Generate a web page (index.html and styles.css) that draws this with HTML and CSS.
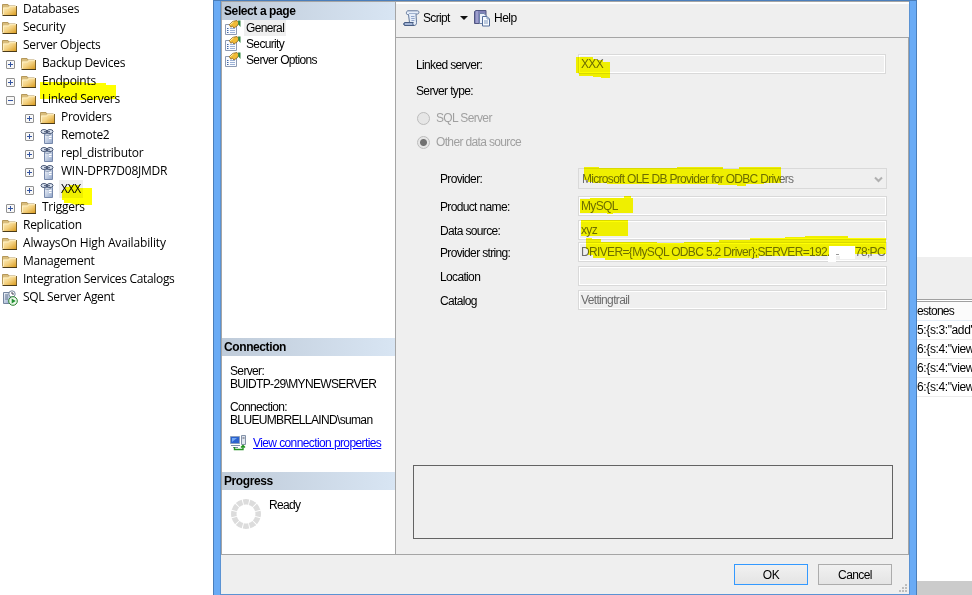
FILE: index.html
```
<!DOCTYPE html>
<html lang="en">
<head>
    <meta charset="utf-8">
    <title>Linked Server Properties</title>
    <link rel="stylesheet" href="styles.css">
</head>
<body>
    <svg class="defs">
        <defs>
            <linearGradient id="gold" x1="0" y1="0" x2="1" y2="1">
                <stop offset="0" stop-color="#fff0c0"/>
                <stop offset=".5" stop-color="#f3d182"/>
                <stop offset="1" stop-color="#d99a1c"/>
            </linearGradient>
            <linearGradient id="steel" x1="0" y1="0" x2="1" y2="1">
                <stop offset="0" stop-color="#f4f7fc"/>
                <stop offset="1" stop-color="#8fa4c8"/>
            </linearGradient>
        </defs>
        <symbol id="folder" viewBox="0 0 16 16">
            <path d="M.5 12.500V2.500h5.500l1 1.500h6.500v2" fill="#d9bd7c" stroke="#b5985a"/>
            <path d="M1 13V5.500h5L7.500 4H14.500v9z" fill="url(#gold)"/>
            <path d="M1.500 12.500v-6.500h5L8 4.700h6" fill="none" stroke="#fff3c9" stroke-width=".8"/>
            <path d="M.5 13.500h14.500" stroke="#4a3a18"/>
            <path d="M14.500 4v9" stroke="#7c6128"/>
        </symbol>
        <symbol id="linked" viewBox="0 0 16 16">
            <path d="M4.500 5.500h8v10h-8z" fill="url(#steel)" stroke="#7688ab"/>
            <path d="M9 8.500h2.500M9 10.500h2.500" stroke="#fff"/>
            <g fill="#dce5f2" stroke="#4a5875">
                <ellipse cx="4" cy="3.500" rx="3" ry="2"/>
                <ellipse cx="10" cy="3.500" rx="3" ry="2"/>
                <path d="M4 3.700h6"/>
                <path d="M4.500 6.500c2 1.500 5.500 1 7-.8" fill="none" stroke="#8695b0"/>
            </g>
        </symbol>
        <symbol id="agent" viewBox="0 0 16 16">
            <path d="M1.500 2.500h7v11h-7z" fill="url(#steel)" stroke="#74859f"/>
            <path d="M3 5h3M3 7h3M3 9h3" stroke="#63758f"/>
            <circle cx="10" cy="4" r="3.200" fill="#fff" stroke="#75879d"/>
            <path d="M10 2v2h2" fill="none" stroke="#445"/>
            <circle cx="11" cy="11" r="4.300" fill="#edf9ec" stroke="#27812c"/>
            <path d="M9.700 8.400v5.200l4-2.600z" fill="#229332"/>
        </symbol>
        <symbol id="page" viewBox="0 0 16 16">
            <path d="M.5 4.500h11v10H.5z" fill="#f9fbff" stroke="#8d9ab2"/>
            <path d="M2 8.500h1.500M2 10.500h1.500M2 12.500h1.500" stroke="#3f65a5"/>
            <path d="M5 8.500h5M5 10.500h5M5 12.500h5" stroke="#9bb1d6"/>
            <path d="M4.300 4.600 8 1.300l4-.8 2 2.300-1.700 3-3.400 2.200-1.600-2-1.400 1.300z" fill="#f1bb36" stroke="#8b6422" stroke-width=".8"/>
            <path d="M13 .5h2.500V7L13.300 4.500z" fill="#358a43"/>
            <path d="m5 4.800 3.500-2.900" stroke="#fff2a8"/>
        </symbol>
    </svg>

    <div class="desktop">
        <ul class="tree">
            <li><svg class="icon"><use href="#folder"/></svg><span>Databases</span></li>
            <li><svg class="icon"><use href="#folder"/></svg><span>Security</span></li>
            <li><svg class="icon"><use href="#folder"/></svg><span>Server Objects</span></li>
            <li class="sub"><i class="toggle"></i><svg class="icon"><use href="#folder"/></svg><span>Backup Devices</span></li>
            <li class="sub"><i class="toggle"></i><svg class="icon"><use href="#folder"/></svg><span>Endpoints</span></li>
            <li class="sub"><i class="toggle open"></i><svg class="icon"><use href="#folder"/></svg><span>Linked Servers</span>
                <svg class="marker mark-linked" width="77" height="20"><path d="M0 0h45v1h21v2h10v14h-15v1H25v-1H0z"/></svg>
            </li>
            <li class="leaf"><i class="toggle"></i><svg class="icon"><use href="#folder"/></svg><span>Providers</span></li>
            <li class="leaf"><i class="toggle"></i><svg class="icon"><use href="#linked"/></svg><span>Remote2</span></li>
            <li class="leaf"><i class="toggle"></i><svg class="icon"><use href="#linked"/></svg><span>repl_distributor</span></li>
            <li class="leaf"><i class="toggle"></i><svg class="icon"><use href="#linked"/></svg><span>WIN-DPR7D08JMDR</span></li>
            <li class="leaf"><i class="toggle"></i><svg class="icon"><use href="#linked"/></svg><span class="current">XXX</span>
                <svg class="marker mark-xxx" width="31" height="22"><path d="M3 2h4V0h10v3h13v17H14l-6-2H2v-3H0V5h3z"/></svg>
            </li>
            <li class="sub"><i class="toggle"></i><svg class="icon"><use href="#folder"/></svg><span>Triggers</span></li>
            <li><svg class="icon"><use href="#folder"/></svg><span>Replication</span></li>
            <li><svg class="icon"><use href="#folder"/></svg><span class="wide">AlwaysOn High Availability</span></li>
            <li><svg class="icon"><use href="#folder"/></svg><span>Management</span></li>
            <li><svg class="icon"><use href="#folder"/></svg><span class="tight">Integration Services Catalogs</span></li>
            <li><svg class="icon"><use href="#agent"/></svg><span class="tight">SQL Server Agent</span></li>
        </ul>

        <div class="dialog">
            <div class="window">
                <div class="panes">
                    <div class="sidebar">
                        <h2>Select a page</h2>
                        <ul class="pages">
                            <li><svg class="icon"><use href="#page"/></svg><span class="current">General</span></li>
                            <li><svg class="icon"><use href="#page"/></svg><span>Security</span></li>
                            <li><svg class="icon"><use href="#page"/></svg><span>Server Options</span></li>
                        </ul>
                        <h2>Connection</h2>
                        <div class="connection">
                            <p>Server:<br>BUIDTP-29\MYNEWSERVER</p>
                            <p>Connection:<br>BLUEUMBRELLAIND\suman</p>
                            <div class="view">
                                <svg class="icon" viewBox="0 0 16 16">
                                    <path d="M.5 1.500h9v7h-9z" fill="#2c62ce" stroke="#8ba0be"/>
                                    <path d="M2 3h5L2 7z" fill="#75aaf5"/>
                                    <path d="M1 10.500h9M3 12.500h5" stroke="#7c8eaa"/>
                                    <path d="M11.500.5h4v9h-4z" fill="#dfe6f0" stroke="#8492a8"/>
                                    <path d="M12.500 3h2" stroke="#556"/>
                                    <path d="M4.500 12v2.500h8.500V10M11 12.500l2-2 2 2" fill="none" stroke="#229122" stroke-width="1.400"/>
                                </svg>
                                <a href="#">View connection properties</a>
                            </div>
                        </div>
                        <h2>Progress</h2>
                        <div class="progress">
                            <svg width="30" height="30"><circle cx="15" cy="15" r="12.200" pathLength="120" stroke-dasharray="8.600 1.400" stroke-dashoffset="4.300"/></svg>
                            <span>Ready</span>
                        </div>
                    </div>

                    <div class="main">
                        <div class="toolbar">
                            <svg width="17" height="17" viewBox="0 0 17 17">
                                <path d="M5 .8h9.500c2 0 1.800 3.200 0 3.200h-1.500l.5 8.500c.2 2-1 3-2.500 3H2c-1.800 0-1.700-3 0-3h4.500L5.500 4.500H4.500c-1.800 0-1.300-3.700.5-3.700z" fill="#e5edf9" stroke="#60769b"/>
                                <path d="M8 6.500h3.500M8.200 8.500h3.500M8.400 10.500h3" stroke="#91a5ca"/>
                                <path d="M2 15.500h9c-1.500-.7-1.500-2-.7-3H2c-1.300 0-1.300 3 0 3z" fill="#a3b5d6" stroke="#485d83"/>
                                <path d="M6 3.500h7" stroke="#9fb1cf"/>
                            </svg>
                            <span class="script">Script</span>
                            <i class="caret"></i>
                            <svg width="17" height="17" viewBox="0 0 17 17">
                                <path d="M.5 1.500 2 .5h10v13H.5z" fill="#8182b8" stroke="#505681"/>
                                <path d="M3 1v12" stroke="#b9bde1"/>
                                <path d="M5.500 3.500H10l2 2v8H5.500z" fill="#eef3fc" stroke="#6f84a9"/>
                                <path d="M8.500 6.500H13l2.500 2.500v7h-7z" fill="#f8fbff" stroke="#546d99"/>
                                <path d="M13 6.500V9h2.500M10 11h4M10 13h4" fill="none" stroke="#819abf"/>
                            </svg>
                            <span class="help">Help</span>
                        </div>

                        <div class="form">
                            <div class="row first">
                                <label>Linked server:</label>
                                <div class="field">XXX
                                    <svg class="marker mark-name" width="35" height="22"><path d="M0 0h17v2h4v1h6v2h7v16h-9v-1h-8v-1H3v-3H0z"/></svg>
                                </div>
                            </div>
                            <div class="type">Server type:</div>
                            <div class="radio"><i></i><span>SQL Server</span></div>
                            <div class="radio on"><i></i><span>Other data source</span></div>

                            <div class="row provider">
                                <label>Provider:</label>
                                <div class="field select"><span class="long">Microsoft OLE DB Provider for ODBC Drivers</span>
                                    <svg class="arrow" width="9" height="8"><path d="m1 1.500 3.500 3.500L8 1.500"/></svg>
                                    <svg class="marker mark-provider" width="198" height="21"><path d="M0 0h15v1h78V0h46v2h16V0h42v16h-17v1h-18v2h-9v-1h-19v-1H23v-1H9v-1H4v-2H0z"/></svg>
                                </div>
                            </div>
                            <div class="row">
                                <label>Product name:</label>
                                <div class="field">MySQL
                                    <svg class="marker mark-product" width="54" height="19"><path d="M0 3h10V2h34V0h7v2h2v15H33v1h-6v-1H0z"/></svg>
                                </div>
                            </div>
                            <div class="row">
                                <label>Data source:</label>
                                <div class="field">xyz
                                    <svg class="marker mark-source" width="47" height="16"><path d="M0 0h47v16H0z"/></svg>
                                </div>
                            </div>
                            <div class="row string">
                                <label>Provider string:</label>
                                <div class="field"><span class="dsn"><span>DRIVER={MySQL ODBC 5.2 Driver};SERVER=192.</span><span>.78;PC</span></span>
                                    <svg class="marker mark-string" width="301" height="26"><path d="M0 2h6v1h9v3h56v1h27V6h35V4h31V2h35V1h20V0h43v2h38v16h-40v2H173v2h-41v1H92v1H19v-2H7v-3H2v-6H0z"/></svg>
                                    <svg class="erase" width="28" height="16"><path d="M1 0h26v13H12v-3H8v6H0V10h1z"/><path class="speck" d="M8 8.500h3"/></svg>
                                </div>
                            </div>
                            <div class="row">
                                <label>Location</label>
                                <div class="field"></div>
                            </div>
                            <div class="row">
                                <label>Catalog</label>
                                <div class="field">Vettingtrail</div>
                            </div>
                            <div class="description"></div>
                        </div>
                    </div>
                </div>
                <div class="buttons">
                    <button class="ok">OK</button>
                    <button>Cancel</button>
                    <svg class="grip" width="9" height="9"><path d="M6 0h2v2H6zM3 3h2v2H3zM6 3h2v2H6zM0 6h2v2H0zM3 6h2v2H3zM6 6h2v2H6z"/></svg>
                </div>
            </div>
        </div>

        <div class="results">
            <div class="band"></div>
            <div class="cell head">estones</div>
            <div class="cell">5:{s:3:"add"</div>
            <div class="cell">6:{s:4:"view</div>
            <div class="cell">6:{s:4:"view</div>
            <div class="cell">6:{s:4:"view</div>
            <div class="status"></div>
        </div>
    </div>
</body>
</html>
```

FILE: styles.css
```
* {
    box-sizing: border-box;
}

body {
    margin: 0;
    background: #fff;
    color: #000;
    font: 12px/18px "Liberation Sans", Arial, sans-serif;
    letter-spacing: -0.65px;
    overflow: hidden;
}

ul, h2, p {
    margin: 0;
    padding: 0;
    list-style: none;
}

.defs {
    position: absolute;
    width: 0;
    height: 0;
}

.desktop {
    display: flex;
    width: 972px;
    height: 595px;
}

.icon {
    width: 16px;
    height: 16px;
    flex: none;
}

.marker {
    position: absolute;
    fill: #ff0;
    mix-blend-mode: multiply;
    z-index: 1;
}

/* object explorer */
.tree {
    width: 213px;
    font: 12px/18px "Open Sans", "Noto Sans", sans-serif;
    letter-spacing: -0.27px;
}

.tree li {
    display: flex;
    align-items: center;
    position: relative;
    height: 18px;
    padding-left: 2px;
    white-space: nowrap;
}

.tree span {
    margin-left: 3px;
    padding: 0 2px;
    line-height: 18px;
}

.tree .wide {
    letter-spacing: -0.15px;
}

.tree .tight {
    letter-spacing: -0.33px;
}

.tree .sub {
    padding-left: 6px;
}

.tree .leaf {
    padding-left: 25px;
}

.tree .icon {
    margin-top: 1px;
}

.toggle {
    width: 9px;
    height: 9px;
    flex: none;
    margin: 2px 6px 0 0;
    border: 1px solid #919191;
    border-radius: 1px;
    background:
        linear-gradient(#3454a0, #3454a0) center / 5px 1px no-repeat,
        linear-gradient(#3454a0, #3454a0) center / 1px 5px no-repeat,
        #f8f8f8;
}

.toggle.open {
    background: linear-gradient(#3454a0, #3454a0) center / 5px 1px no-repeat, #f8f8f8;
}

.current {
    background: #efefef;
}

.mark-linked {
    left: 40px;
    top: -8px;
}

.mark-xxx {
    left: 62px;
    top: 5px;
}

/* properties dialog */
.dialog {
    width: 704px;
    padding: 0 6px;
    border: solid #4a7ebb;
    border-width: 1px 1px 0;
    background: #6aabf5;
}

.window {
    width: 690px;
    height: 594px;
    border: solid #5b93d3;
    border-width: 0 1px 1px;
    background: #efefef;
}

.panes {
    display: flex;
    width: 688px;
    height: 554px;
    border: 1px solid #a5a5a5;
    border-right: 0;
}

.sidebar {
    width: 174px;
    background: #fff;
    border-right: 1px solid #a5a5a5;
}

.sidebar h2 {
    height: 18px;
    padding-left: 2px;
    background: linear-gradient(90deg, #bfcbd9, #d8e5f3);
    font: bold 12px/18px "Liberation Sans", Arial, sans-serif;
    letter-spacing: -0.4px;
}

.pages {
    height: 318px;
}

.pages li {
    display: flex;
    height: 16px;
    padding-left: 3px;
    line-height: 16px;
}

.pages span {
    margin-left: 3px;
    padding: 0 2px;
}

.connection {
    height: 116px;
    padding: 9px 0 0 8px;
    line-height: 13px;
}

.connection p {
    margin-bottom: 10px;
}

.view {
    display: flex;
    align-items: center;
    gap: 7px;
    margin-top: -2px;
}

.view a {
    color: #00f;
    letter-spacing: -0.6px;
}

.progress {
    display: flex;
    padding: 9px 0 0 9px;
    gap: 8px;
    line-height: 13px;
}

.progress circle {
    fill: none;
    stroke: #dcdcdc;
    stroke-width: 5.5;
}

.main {
    flex: 1;
}

.toolbar {
    display: flex;
    align-items: center;
    height: 36px;
    padding: 0 0 5px 7px;
    border-top: 2px solid #fff;
    border-bottom: 1px solid #a5a5a5;
}

.script {
    width: 37px;
    margin-left: 3px;
}

.caret {
    margin-right: 6px;
    border: 4px solid transparent;
    border-top-color: #111;
    border-bottom: 0;
}

.help {
    margin-left: 3px;
    letter-spacing: -0.5px;
}

.form {
    height: 516px;
    padding: 16px 0 0 20px;
    border-right: 1px solid #a5a5a5;
}

.row {
    display: flex;
    height: 20px;
    margin: 0 0 4px 24px;
}

.row label {
    width: 138px;
    line-height: 22px;
}

.row.first {
    margin: 0 0 8px;
}

.first label {
    width: 162px;
}

.field {
    position: relative;
    width: 309px;
    height: 20px;
    padding-left: 2px;
    border: 1px solid #d9d9d9;
    box-shadow: inset 0 0 0 1px #fff;
    color: #6d6d6d;
    line-height: 18px;
    white-space: nowrap;
}

.first .field {
    width: 308px;
}

.type {
    height: 18px;
}

.radio {
    display: flex;
    align-items: center;
    height: 24px;
    margin-left: 1px;
    gap: 6px;
    color: #a0a0a0;
}

.type + .radio {
    margin-top: 6px;
}

.radio i {
    width: 13px;
    height: 13px;
    border: 1px solid #bcbcbc;
    border-radius: 50%;
    background: #e6e6e6;
}

.radio.on i {
    background: radial-gradient(circle, #707070 3px, #e6e6e6 4px);
}

.row.provider {
    height: 21px;
    margin-top: 14px;
    margin-bottom: 7px;
}

.field.select {
    height: 21px;
    padding-left: 3px;
    box-shadow: none;
    line-height: 20px;
}

.long {
    letter-spacing: -0.7px;
}

.arrow {
    position: absolute;
    right: 3px;
    top: 7px;
    fill: none;
    stroke: #b0b0b0;
    stroke-width: 2;
}

.row.string {
    margin-top: -2px;
}

.dsn {
    display: flex;
    justify-content: space-between;
    width: 304px;
}

.erase {
    position: absolute;
    left: 249px;
    top: 3px;
    fill: #fff;
    z-index: 2;
}

.speck {
    stroke: #999;
}

.mark-name {
    left: -3px;
    top: 2px;
}

.mark-provider {
    left: 5px;
    top: -2px;
}

.mark-product {
    left: 1px;
    top: -1px;
}

.mark-source {
    left: 2px;
    top: -1px;
}

.mark-string {
    left: 7px;
    top: -7px;
}

.description {
    width: 480px;
    height: 74px;
    margin: 155px 0 0 -3px;
    border: 1px solid #636363;
}

.buttons {
    display: flex;
    gap: 10px;
    position: relative;
    padding: 9px 0 0 513px;
}

button {
    width: 74px;
    height: 21px;
    padding: 0;
    border: 1px solid #acacac;
    background: linear-gradient(#f1f1f1, #e4e4e4);
    font: inherit;
    letter-spacing: -0.6px;
}

.ok {
    border-color: #3399ff;
    letter-spacing: -0.3px;
}

.grip {
    position: absolute;
    right: 1px;
    bottom: -8px;
    fill: #bdbdbd;
}

/* query results behind the dialog */
.results {
    display: flex;
    flex-direction: column;
    width: 55px;
    overflow: hidden;
    padding-top: 257px;
    letter-spacing: -0.38px;
}

.band {
    height: 45px;
    background: #efefef;
    border-bottom: 1px solid #a0a0a0;
    box-shadow: inset 0 -1px #fff, inset 0 -2px #a0a0a0;
}

.cell {
    height: 19px;
    flex: none;
    border-bottom: 1px solid #ececec;
    line-height: 19px;
    white-space: nowrap;
}

.cell.head {
    background: #fbfbfb;
    border-color: #e3edf7;
    letter-spacing: -0.7px;
}

.status {
    height: 14px;
    margin-top: auto;
    background: #cbcbcb;
}
```
